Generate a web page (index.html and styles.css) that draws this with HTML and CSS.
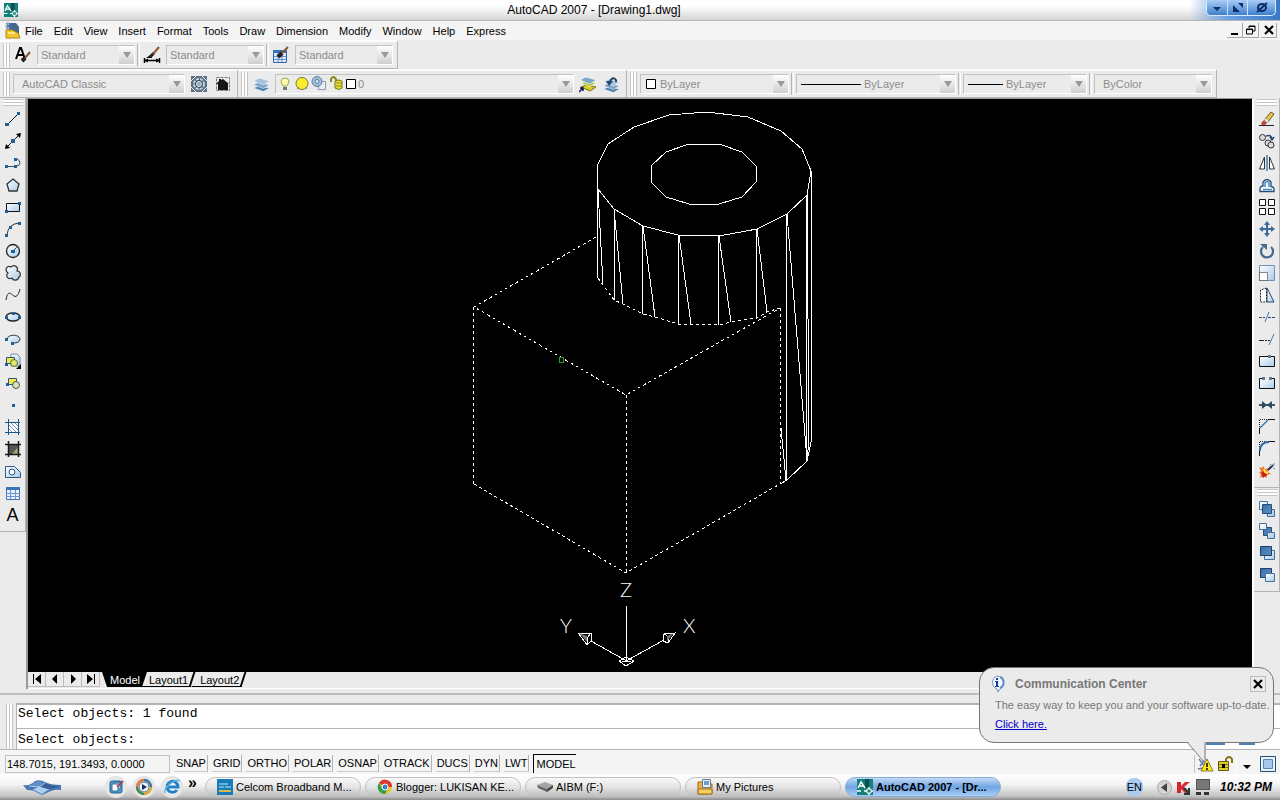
FILE: index.html
```
<!DOCTYPE html>
<html lang="en">
<head>
  <meta charset="UTF-8" />
  <title>AutoCAD 2007 - [Drawing1.dwg]</title>
  <link rel="stylesheet" href="styles.css">
</head>
<body>
  <!-- shared shapes -->
  <svg class="defs" aria-hidden="true">
    <defs>
      <linearGradient id="pale" x1="0" y1="0" x2="1" y2="1"><stop offset="0" stop-color="#fff"/><stop offset="1" stop-color="#a9cbe8"/></linearGradient>
      <linearGradient id="deep" x1="0" y1="0" x2="1" y2="1"><stop offset="0" stop-color="#3a6ea5"/><stop offset="1" stop-color="#5b8fc6"/></linearGradient>
      <symbol id="acad" viewBox="0 0 16 16"><path fill="#14807a" d="M0 0h16v16H0z"/><path fill="#0b4f50" d="M8 0h4v9H8z"/><path d="M1 9l3-6 4 6M2 7h4M7 12h9M12 8v8M0 12h4" fill="none" stroke="#fff" stroke-width="1.4"/><path fill="#14807a" stroke="#fff" d="M10 10h4v4h-4z"/></symbol>
      <symbol id="layers" viewBox="0 0 16 16"><path fill="#4c7fae" stroke="#fff" stroke-width=".5" d="M0 12l5-2 11 2-6 3.500z"/><path fill="#7ba6cc" stroke="#fff" stroke-width=".5" d="M0 9l5-3 11 3-6 3.500z"/><path fill="#a5c3dd" stroke="#fff" stroke-width=".5" d="M0 5l6-3 10 3-6 4z"/></symbol>
    </defs>
  </svg>

  <header class="titlebar">
    <svg class="app-icon" width="14" height="14"><use href="#acad"/></svg>
    <h1>AutoCAD 2007 - [Drawing1.dwg]</h1>
    <div class="window-buttons">
      <button aria-label="Minimize"><svg width="10" height="10"><path d="M1 4h8L5 8z" fill="#0c2f66"/></svg></button>
      <button aria-label="Restore"><svg width="12" height="10"><path d="M1 2v7h7zM6 0h5v5z" fill="#0c2f66"/></svg></button>
      <button class="wide" aria-label="Close"><svg width="12" height="11"><ellipse cx="6" cy="5.500" rx="4" ry="3.500" fill="none" stroke="#0c2f66" stroke-width="2"/><path d="M1 10L11 1" stroke="#0c2f66" stroke-width="2"/></svg></button>
    </div>
  </header>

  <nav class="menubar">
    <svg class="doc-icon" width="16" height="17"><path d="M4 1h7l3 4v9H4z" fill="#44668f"/><path d="M0 4h7M3 0v8M1 1l5 6M6 1L1 7" stroke="#4d78a8"/><path d="M1 8h6l6 3 2 5H1z" fill="#f5c431" stroke="#b98812"/><path d="M3 11h7" stroke="#ffeb8a" stroke-width="2"/></svg>
    <a href="#">File</a><a href="#">Edit</a><a href="#">View</a><a href="#">Insert</a><a href="#">Format</a><a href="#">Tools</a><a href="#">Draw</a><a href="#">Dimension</a><a href="#">Modify</a><a href="#">Window</a><a href="#">Help</a><a href="#">Express</a>
    <div class="doc-buttons">
      <button aria-label="Minimize drawing"><svg width="10" height="10"><path d="M1 8h7v2H1z"/></svg></button>
      <button aria-label="Restore drawing"><svg width="10" height="10" fill="none" stroke="#000"><path d="M3 3V1h6v5H7M3 1.500h6M.5 4v5h6V4zM0 4.500h7"/></svg></button>
      <button class="apart" aria-label="Close drawing"><svg width="10" height="10"><path d="M1 1l8 8M9 1L1 9" stroke="#000" stroke-width="2.200"/></svg></button>
    </div>
  </nav>

  <div class="toolbar-row">
    <div class="toolbar">
      <span class="grip"></span>
      <button class="tool" aria-label="Text Style"><svg width="18" height="18"><path d="M2 13L6 2h1l4 11M3 9h7" fill="none" stroke="#000" stroke-width="2"/><path d="M8 15l3-3" stroke="#222" stroke-width="4"/><path d="M11 12l5-6" stroke="#8b5630" stroke-width="2"/></svg></button>
      <div class="combo style"><select aria-label="Text style" disabled><option>Standard</option></select><i></i></div>
      <span class="sep"></span>
      <button class="tool" aria-label="Dimension Style"><svg width="18" height="18"><path d="M1.500 12v5M16.500 12v5M1 14.500h15" stroke="#000" stroke-width="1.500"/><path d="M1 14.500l4-2v4zM17 14.500l-4-2v4z"/><path d="M3 12l6-4v4z"/><path d="M7 11l4-4" stroke="#222" stroke-width="3"/><path d="M10 8l6-7" stroke="#8b5630" stroke-width="2"/></svg></button>
      <div class="combo style"><select aria-label="Dimension style" disabled><option>Standard</option></select><i></i></div>
      <span class="sep"></span>
      <button class="tool" aria-label="Table Style"><svg width="18" height="18"><path d="M1.500 4.500h13v12h-13z" fill="#dce9f8" stroke="#3565a8"/><path d="M1 4h14v3H1z" fill="#3d6fb4"/><path d="M2 10.500h12M2 13.500h12M6 7v9M10 7v9" stroke="#6690c8"/><path d="M6 11l4-4" stroke="#222" stroke-width="4"/><path d="M10 7l6-6" stroke="#8b5630" stroke-width="2"/></svg></button>
      <div class="combo style"><select aria-label="Table style" disabled><option>Standard</option></select><i></i></div>
    </div>
  </div>

  <div class="toolbar-row">
    <div class="toolbar">
      <span class="grip"></span>
      <div class="combo workspace-list inset"><select aria-label="Workspace" disabled><option>AutoCAD Classic</option></select><i></i></div>
      <button class="tool" aria-label="Workspace Settings"><svg width="16" height="16"><path d="M0 0h16v16H0z" fill="#5c7084"/><path d="M0 5l5-5M11 0l5 5M16 11l-5 5M5 16l-5-5" fill="none" stroke="#e4ebf1"/><circle cx="8" cy="8" r="5" fill="#34495e" stroke="#c3d2df" stroke-width="2" stroke-dasharray="3 1"/><circle cx="8" cy="8" r="2.500" fill="#8fa8bd" stroke="#dfe9f1"/></svg></button>
      <button class="tool" aria-label="My Workspace"><svg width="16" height="16"><path d="M1.500 1.500h13v13h-13z" fill="none" stroke="#777" stroke-dasharray="3 1"/><path d="M1 8l3-3V3h2v1l2-1 6 5h-1v6H3V8z" fill="#161616"/></svg></button>
    </div>
    <div class="toolbar">
      <span class="grip"></span>
      <button class="tool" aria-label="Layer Properties Manager"><svg width="17" height="16"><use href="#layers"/></svg></button>
      <div class="combo layer-list">
        <svg width="80" height="18">
          <path d="M5 7a4 4 0 1 1 8 0l-2 4H7z" fill="#fff9a8" stroke="#a3a35a"/><path d="M7 12h4v3H7z" fill="#777"/>
          <circle cx="26" cy="8.500" r="6" fill="#fbed2e" stroke="#77783a"/><path d="M21 14l2-2M31 14l-2-2" stroke="#8a8a8a"/>
          <path d="M42.500 6.500h7v8h-7z" fill="#e8eef4" stroke="#8a9bab"/><circle cx="41" cy="6.500" r="5" fill="#a5c0d8" stroke="#557b9e"/><circle cx="41" cy="6.500" r="2" fill="#dce9f4" stroke="#557b9e"/>
          <path d="M55 7V4q2-4 5 0v4" fill="none" stroke="#7e8b20" stroke-width="2"/><path d="M59 6q4-2 7 0v7q-3 3-7 0z" fill="#e6dd3c" stroke="#77761c"/><path d="M60 8h6M60 11h6" stroke="#8f8d1d"/>
          <path d="M70.500 4.500h9v9h-9z" fill="#fff" stroke="#000"/>
        </svg>
        <select aria-label="Layer" disabled><option>0</option></select><i></i>
      </div>
      <button class="tool" aria-label="Make Object's Layer Current"><svg width="18" height="17"><path d="M2 11l5-2 10 2-6 4z" fill="#d6cd22" stroke="#777421"/><path d="M2 7l5-2 10 2-6 4z" fill="#b6c94b" stroke="#fff" stroke-width=".5"/><path d="M1 4l6-3 10 3-6 4z" fill="#7ca6cc" stroke="#fff" stroke-width=".5"/><path d="M0 16l4-4M1 12h3v3" stroke="#111b55" fill="none" stroke-width="1.500"/></svg></button>
      <button class="tool" aria-label="Layer Previous"><svg width="18" height="17"><use href="#layers" y="1" width="17" height="16"/><path d="M13 6V4q-3-4-6 1" fill="none" stroke="#26466d" stroke-width="2"/><path d="M3 5h7l-4 5z" fill="#26466d"/></svg></button>
    </div>
    <div class="toolbar">
      <span class="grip"></span>
      <div class="combo color-list"><svg width="17" height="18"><path d="M5.500 4.500h9v9h-9z" fill="#fff" stroke="#000"/></svg><select aria-label="Color" disabled><option>ByLayer</option></select><i></i></div>
      <span class="sep"></span>
      <div class="combo linetype-list"><svg width="65" height="18"><path d="M4 9.500h60" stroke="#000"/></svg><select aria-label="Linetype" disabled><option>ByLayer</option></select><i></i></div>
      <span class="sep"></span>
      <div class="combo weight-list"><svg width="40" height="18"><path d="M4 9.500h35" stroke="#000"/></svg><select aria-label="Lineweight" disabled><option>ByLayer</option></select><i></i></div>
      <span class="sep"></span>
      <div class="combo plot-list inset"><select aria-label="Plot style" disabled><option>ByColor</option></select><i></i></div>
    </div>
  </div>

  <main class="workspace">
    <aside class="side">
      <div class="palette">
        <span class="grip flat"></span>
        <button aria-label="Line"><svg width="16" height="16"><path d="M2 14L14 2" stroke="#111"/><path d="M0 12h4v3H0zM12 1h3v3h-3z" fill="#1d5f96"/></svg></button>
        <button aria-label="Construction Line"><svg width="16" height="16"><path d="M2 14L14 2" stroke="#111"/><path d="M0 16l1-5 4 4zM16 0l-1 5-4-4z"/><path d="M6 6h4v4H6z" fill="#1d5f96"/></svg></button>
        <button aria-label="Polyline"><svg width="16" height="16" fill="none"><path d="M1 11.500h10M10 4h2q3 1 3 4t-4 3" stroke="#35506c"/><path d="M0 10h3v3H0zM9 10h3v3H9zM9 3h3v3H9z" fill="#1d5f96"/></svg></button>
        <button aria-label="Polygon"><svg width="16" height="16"><path d="M8 2l6 5-2 7H4L2 7z" fill="url(#pale)" stroke="#333" stroke-width="1.300"/></svg></button>
        <button aria-label="Rectangle"><svg width="16" height="16"><path d="M1.500 4.500h13v8h-13z" fill="url(#pale)" stroke="#111"/><path d="M0 11h3v3H0zM13 3h3v3h-3z" fill="#1d5f96"/></svg></button>
        <button aria-label="Arc"><svg width="16" height="16"><path d="M2 14Q3 3 14 2" fill="none" stroke="#333"/><path d="M0 13h3v3H0zM4 5h3v3H4zM13 1h3v3h-3z" fill="#1d5f96"/></svg></button>
        <button aria-label="Circle"><svg width="16" height="16"><circle cx="8" cy="8" r="6.500" fill="url(#pale)" stroke="#222" stroke-width="1.300"/><path d="M7 9l5-5" stroke="#1d5f96"/><path d="M6 7h4v3H6z" fill="#1d5f96"/></svg></button>
        <button aria-label="Revision Cloud"><svg width="16" height="16"><path d="M3 8C-1 5 2 0 6 2c3-3 8 0 6 4 4 0 4 5 2 6-1 4-6 4-7 1-4 2-7-2-4-5z" fill="url(#pale)" stroke="#333" stroke-width="1.200"/></svg></button>
        <button aria-label="Spline"><svg width="16" height="16"><path d="M1 13C3 2 6 7 9 9s5-3 6-7" fill="none" stroke="#222"/></svg></button>
        <button aria-label="Ellipse"><svg width="16" height="16"><ellipse cx="8" cy="8" rx="7" ry="4" fill="url(#pale)" stroke="#222" stroke-width="1.300"/><path d="M0 7h3v3H0zM13 7h3v3h-3zM7 3h3v3H7z" fill="#1d5f96"/></svg></button>
        <button aria-label="Ellipse Arc"><svg width="16" height="16"><path d="M2 8c1-5 12-5 13 0 0 3-3 4-7 4" fill="url(#pale)" stroke="#333"/><path d="M0 7h3v3H0zM6 11h3v3H6z" fill="#1d5f96"/></svg></button>
        <button aria-label="Insert Block"><svg width="16" height="16"><path d="M6 1h6l3 3v9H6z" fill="url(#pale)" stroke="#7793ac"/><path d="M1.500 4.500h8v6h-8z" fill="#f2e94e" stroke="#31517a"/><circle cx="9" cy="10" r="3.500" fill="#dbe86b" stroke="#56742b"/><path d="M0 10h3v3H0z" fill="#1d5f96"/><path d="M16 11v5h-5z"/></svg></button>
        <button aria-label="Make Block"><svg width="16" height="16"><path d="M3.500 3.500h8v6h-8z" fill="#f2e94e" stroke="#31517a"/><circle cx="11" cy="10" r="3.500" fill="#d5dfc2" stroke="#415d44"/><path d="M1 8h3v3H1z" fill="#1d5f96"/></svg></button>
        <button aria-label="Point"><svg width="16" height="16"><path d="M7 7h3v3H7z" fill="#1d5f96"/></svg></button>
        <button aria-label="Hatch"><svg width="16" height="16"><path d="M3 3h10v10H3z" fill="#fff"/><path d="M3 5l8 8M3 9l4 4M5 3l8 8M9 3l4 4" stroke="#6b95c0"/><path d="M0 3.500h15M0 13.500h15M3.500 0v16M13.500 0v16" stroke="#1f5584"/></svg></button>
        <button aria-label="Gradient"><svg width="16" height="16"><path d="M3 3h11v11H3z" fill="#56564c"/><path d="M7 13l6-7v7z" fill="#a5a57b"/><path d="M0 3.500h16M0 13.500h16M3.500 0v16M13.500 0v16" stroke="#17191d" stroke-width="1.500"/></svg></button>
        <button aria-label="Region"><svg width="16" height="16"><path d="M.5 3.500h9l6 6v5H.5z" fill="url(#pale)" stroke="#2c5885"/><circle cx="7" cy="9" r="3" fill="#eef5fb" stroke="#2c5885"/></svg></button>
        <button aria-label="Table"><svg width="16" height="16"><path d="M1.500 2.500h13v12h-13z" fill="#e8f1fc" stroke="#3f73b8"/><path d="M1 2h14v3H1z" fill="#3f73b8"/><path d="M5.500 5v9M10.500 5v9M1 8.500h14M1 11.500h14" stroke="#6a95d0"/></svg></button>
        <button class="mtext" aria-label="Multiline Text">A</button>
      </div>
    </aside>

    <section class="document">
      <svg class="model" viewBox="28 99 1224 573">
        <g fill="none" stroke="#fff" shape-rendering="crispEdges">
          <!-- cylinder rim and hole -->
          <path d="M597 166L608 144 634 127 669 115 707 112 748 117 781 131 802 149 811 171 807 195 787 214 757 229 719 236 678 235 643 226 614 209 598 189z"/>
          <path d="M651 166L666 152 689 144 719 144 742 152 756 166 756 182 742 197 719 204 689 204 666 197 651 182z"/>
          <!-- facets -->
          <path d="M597.500 166V278M598 189L603 285M614.500 209V300M614 209L623 304M642.500 226V314M643 226L655 317M678.500 235V324M679 235L691 324M718.500 236V325M719 236L731 322M756.500 229V318M757 229L767 312M786.500 214V480M787 214L807 460M806.500 195V461M807 195L809 440 807 461M811.500 171V440L807 461 787 480 780 484M781 428L786 480"/>
          <!-- selected solid -->
          <g stroke-dasharray="3 3">
            <path d="M598 278L603 285 614 300 623 304 643 314 655 317 678 324 691 324 719 325 731 322 757 318 767 312 780 308"/>
            <path d="M596 237L474 307L626 395L780 308M474 484L626 573L780 484"/>
            <path d="M473.500 307V484M626.500 395V573M780.500 308V484"/>
          </g>
          <path stroke="#2b9a2b" d="M559.500 357.500h4v5h-4z"/>
          <!-- UCS icon -->
          <path d="M626.500 606V661L591 641M626 661L664 640M619 661L626 657 634 661 626 666zM622 661h9"/>
          <path d="M578 633L591 633 592 640 587 645zM587 645L587 638 591 633M675 633L664 634 663 641 668 643zM668 643L669 637 664 634"/>
        </g>
        <path d="M579 633l8 3v6zM674 633l-7 3v5z" fill="#777"/>
        <g class="axis"><text x="620" y="597">Z</text><text x="560" y="633">Y</text><text x="683" y="633">X</text></g>
      </svg>
      <div class="layout-tabs">
        <button class="step" aria-label="First tab"><svg width="10" height="10"><path d="M1 0h1v10H1zM9 0v10L3 5z"/></svg></button>
        <button class="step" aria-label="Previous tab"><svg width="10" height="10"><path d="M7 0v10L2 5z"/></svg></button>
        <button class="step" aria-label="Next tab"><svg width="10" height="10"><path d="M3 0v10l5-5z"/></svg></button>
        <button class="step" aria-label="Last tab"><svg width="10" height="10"><path d="M8 0h1v10H8zM1 0v10l6-5z"/></svg></button>
        <button class="tab active">Model</button>
        <button class="tab">Layout1</button>
        <button class="tab">Layout2</button>
      </div>
    </section>

    <aside class="side right">
      <div class="palette">
        <span class="grip flat"></span>
        <button aria-label="Erase"><svg width="16" height="16"><path d="M0 14.500h15" stroke="#222"/><path d="M6 8l6-7 3 2-6 8z" fill="#e8c54a" stroke="#6d5a2a"/><path d="M5 9l2-2 3 3-2 2z" fill="#eee" stroke="#777" stroke-width=".5"/><path d="M2 12l3-3 3 3-2 2H3z" fill="#c34a35"/></svg></button>
        <button aria-label="Copy"><svg width="16" height="16" fill="#ddd" stroke="#333"><circle cx="3.500" cy="4.500" r="3"/><circle cx="9" cy="10" r="3"/><circle cx="12" cy="12" r="3"/><path d="M7 3q5-2 6 3M11 4l2 3 2-3" fill="none" stroke="#234c78" stroke-width="1.500"/></svg></button>
        <button aria-label="Mirror"><svg width="16" height="16"><path d="M5.500 2v12H.5zM10.500 2v12h5z" fill="#fff" stroke="#333"/><path d="M8 0v16" stroke="#3a7bb8" stroke-width="1.500"/></svg></button>
        <button aria-label="Offset"><svg width="16" height="16"><path d="M1 14.500h14v-3q-1-2-3-2V5q-4-5-8 0v4q-3 0-3 3z" fill="#fff" stroke="#234c78" stroke-width="1.300"/><path d="M4 12.500h9M6 10V6q2-3 4 0v4" fill="none" stroke="#3a8bc8" stroke-width="1.500"/></svg></button>
        <button aria-label="Array"><svg width="16" height="16"><path d="M.5.5h6v6h-6zM9.500.5h6v6h-6zM.5 9.500h6v6h-6zM9.500 9.500h6v6h-6z" fill="#fff" stroke="#111"/></svg></button>
        <button aria-label="Move"><svg width="16" height="16"><path d="M8 0l3 4H9v3h3V5l4 3-4 3V9H9v3h2l-3 4-3-4h2V9H4v2L0 8l4-3v2h3V4H5z" fill="#3c6a9a"/></svg></button>
        <button aria-label="Rotate"><svg width="16" height="16"><path d="M4 4a6 6 0 1 0 8 0" fill="none" stroke="#46698f" stroke-width="2.200"/><path d="M1 1h7v6z" fill="#46698f"/></svg></button>
        <button aria-label="Scale"><svg width="16" height="16"><path d="M.5.5h15v15H.5z" fill="url(#pale)" stroke="#6f93b8"/><path d="M.5 7.500h8v8h-8z" fill="#fff" stroke="#222" stroke-dasharray="1 1"/></svg></button>
        <button aria-label="Stretch"><svg width="16" height="16"><path d="M8 1l7 14H8z" fill="url(#pale)" stroke="#234c78"/><path d="M7.500 1L1.500 3v12h6z" fill="#fff" stroke="#222" stroke-dasharray="2 1"/></svg></button>
        <button aria-label="Trim"><svg width="16" height="16"><path d="M0 8.500h6M9 8.500h7" stroke="#234c78" stroke-dasharray="3 1"/><path d="M6 13l4-10" stroke="#3a7bb8"/></svg></button>
        <button aria-label="Extend"><svg width="16" height="16"><path d="M0 9.500h11" stroke="#222" stroke-dasharray="5 1 2 1"/><path d="M10 14l5-11" stroke="#3a7bb8"/></svg></button>
        <button aria-label="Break at Point"><svg width="16" height="16"><path d="M.5 3.500h15v10H.5z" fill="url(#pale)" stroke="#111"/><path d="M9 2h3v3H9z" fill="#62788d"/></svg></button>
        <button aria-label="Break"><svg width="16" height="16"><path d="M1 4h14v10H1z" fill="url(#pale)"/><path d="M3 3.500H.5v10h15v-10H13" fill="none" stroke="#111"/><path d="M3 2h3v3H3zM10 2h3v3h-3z" fill="#62788d"/></svg></button>
        <button aria-label="Join"><svg width="16" height="16"><path d="M0 8h16" stroke="#222" stroke-width="1.500"/><path d="M3 4l5 4-5 4zM13 4L8 8l5 4z" fill="#234c68"/></svg></button>
        <button aria-label="Chamfer"><svg width="16" height="16"><path d="M.5 8V.5H8" fill="none" stroke="#222" stroke-dasharray="1 1"/><path d="M.5 15v-6M9 .5h7" stroke="#111"/><path d="M1 9l8-8" stroke="#3a7bb8" stroke-width="1.500"/></svg></button>
        <button aria-label="Fillet"><svg width="16" height="16"><path d="M.5 8V.5H8" fill="none" stroke="#222" stroke-dasharray="1 1"/><path d="M.5 15v-6M9 .5h7" stroke="#111"/><path d="M1 10Q1 1 10 1" fill="none" stroke="#2d6ca8" stroke-width="2"/></svg></button>
        <button aria-label="Explode"><svg width="16" height="16"><path d="M0 4l3 1 1-2 2 3 4-1-1 4 3 2-4 1v3l-3-2-4 2 1-4-2-1 2-2z" fill="#ef7a2e"/><path d="M2 10l3-2 3 4-4 3z" fill="#c92218"/><path d="M5 6l1 3 3 1" stroke="#ffe14d" stroke-width="2" fill="none"/><path d="M9 7l5-5" stroke="#283a4d" stroke-width="2"/><path d="M11 1l2 2M14 5l2 1M15 0v3" stroke="#6b94b8"/></svg></button>
      </div>
      <div class="palette">
        <span class="grip flat"></span>
        <button aria-label="Bring to Front"><svg width="16" height="16" stroke="#46719c"><path d="M.5.5h8v8h-8zM8.500 8.500h7v7h-7z" fill="url(#pale)"/><path d="M3.500 3.500h9v9h-9z" fill="url(#deep)" stroke="#244d7c"/></svg></button>
        <button aria-label="Send to Back"><svg width="16" height="16" stroke="#46719c"><path d="M4.500 4.500h8v8h-8z" fill="url(#deep)" stroke="#244d7c"/><path d="M.5.500h7v6h-7zM8.500 9.500h7v6h-7z" fill="url(#pale)"/></svg></button>
        <button aria-label="Bring Above Objects"><svg width="16" height="16" stroke="#46719c"><path d="M5.500 5.500h10v9h-10z" fill="url(#pale)"/><path d="M1.500 1.500h11v9h-11z" fill="url(#deep)" stroke="#1b3f68"/></svg></button>
        <button aria-label="Send Under Objects"><svg width="16" height="16" stroke="#46719c"><path d="M1.500 1.500h11v9h-11z" fill="url(#deep)" stroke="#1b3f68"/><path d="M6.500 6.500h9v8h-9z" fill="url(#pale)"/></svg></button>
      </div>
    </aside>
  </main>

  <section class="command">
    <span class="grip tall"></span>
    <div class="console">
      <output>Select objects: 1 found</output>
      <input type="text" aria-label="Command line" value="Select objects:">
    </div>
  </section>

  <footer class="statusbar">
    <span class="coords">148.7015, 191.3493, 0.0000</span>
    <button>SNAP</button><button>GRID</button><button>ORTHO</button><button>POLAR</button><button>OSNAP</button><button>OTRACK</button><button>DUCS</button><button>DYN</button><button>LWT</button><button class="on">MODEL</button>
    <div class="status-tray">
      <div class="tray-box">
        <svg width="18" height="18"><path d="M3 4l7 9M10 3L4 11M2 14l5-1" stroke="#6278a5" stroke-width="1.500"/><path d="M11 4l6 12H5z" fill="#ffe924" stroke="#8c7f18"/><path d="M11 8v4M11 13v2" stroke="#000" stroke-width="1.500"/></svg>
        <svg width="18" height="18"><path d="M9 8V4q3-4 6 0v4" fill="none" stroke="#80751c" stroke-width="2"/><path d="M1.500 6.500h10v9h-10z" fill="#e2cf26" stroke="#625a10"/><path d="M2 9.500h9M2 12.500h9" stroke="#857a17"/><path d="M5 9h3v4H5z"/></svg>
      </div>
      <button class="more" aria-label="Status bar menu"><svg width="8" height="5"><path d="M0 0h8L4 4z"/></svg></button>
      <button class="clean" aria-label="Clean screen"><svg width="16" height="16"><path d="M.5.5h15v15H.5z" fill="#e8f2fb" stroke="#24507e"/><path d="M3.500 3.500h9v9h-9z" fill="#a5c9ea" stroke="#5688b8"/></svg></button>
    </div>

    <div class="balloon" role="status">
      <div class="balloon-head">
        <svg width="17" height="18"><path d="M8 1a7 7 0 0 1 3 13l-2 3-1-3A7 7 0 0 1 8 1z" fill="#f4f8ff" stroke="#6f93c4"/><path d="M11 2a6 6 0 0 1 0 11" fill="none" stroke="#5e8dcc" stroke-width="2"/><path d="M7 3h2v2H7zM6 6h3v5h1v1H6v-1h1V7H6z" fill="#173c9c"/></svg>
        <strong>Communication Center</strong>
        <button aria-label="Close message"><svg width="10" height="10"><path d="M1 1l8 8M9 1L1 9" stroke="#000" stroke-width="2.200"/></svg></button>
      </div>
      <p>The easy way to keep you and your software up-to-date.</p>
      <a href="#">Click here.</a>
      <svg class="tail" width="68" height="24"><path d="M19 2h49v2H19z" fill="#4d7fbd"/><path d="M38 2h14v2H38z" fill="#fff"/><path d="M0 0h19v22z" fill="#ebebeb"/><path d="M0 1l18 21V1" fill="none" stroke="#777"/></svg>
    </div>
  </footer>

  <div class="taskbar">
    <button class="start" aria-label="Start"><svg width="40" height="18"><path d="M1 7q8 1 12-4 5-2 10 1 5 3 16 3v5q-5-1-10 1l-9 4-8-4q-3-1-7-1z" fill="#4a77b3"/><path d="M13 4q5-2 9 1l-6 4q-4-1-9-1 4-1 6-4z" fill="#5f8fc8"/><path d="M23 5q6 3 15 3-6 3-12 3l-9-2z" fill="#37609b"/><path d="M12 12l5-3 9 3-6 4z" fill="#a9d2f2"/><path d="M7 8q10 0 20 4M23 5q-6 5-12 7" stroke="#dbe9f8" fill="none" stroke-width=".7"/></svg></button>
    <div class="quick">
      <button aria-label="Show Desktop"><svg width="18" height="18"><rect x="3" y="3" width="12" height="12" rx="2" fill="#4e99cc" stroke="#23608f"/><path d="M5 6h6v7H5zM7 5h6v6" fill="#fff" stroke="#31739f"/><path d="M10 9l6-6" stroke="#b33131" stroke-width="1.500"/></svg></button>
      <button aria-label="Media Player"><svg width="18" height="18" fill="none" stroke-width="2.500"><path d="M2 9a7 7 0 0 1 7-7" stroke="#de793f"/><path d="M9 2a7 7 0 0 1 7 7" stroke="#3c74a4"/><path d="M16 9a7 7 0 0 1-7 7" stroke="#d9a92c"/><path d="M9 16a7 7 0 0 1-7-7" stroke="#428743"/><circle cx="9" cy="9" r="5" fill="#f1f5fa" stroke="#566b88" stroke-width="1"/><path d="M7 6l5 3-5 3z" fill="#142d62"/></svg></button>
      <button aria-label="Internet Explorer"><svg width="18" height="18" fill="none"><path d="M14 12a5.500 5.500 0 1 1 1-3H5" stroke="#2582c4" stroke-width="3"/><path d="M2 15C0 10 12 0 17 3" stroke="#65b3e5" stroke-width="1.500"/></svg></button>
      <span class="chevron">»</span>
    </div>
    <nav class="tasks">
      <button><svg width="16" height="16"><path d="M0 0h16v16H0z" fill="#167db9"/><path d="M2 5h9M2 8h5M8 8h6" stroke="#c4e6f7"/><path d="M2 12h12" stroke="#d9b74b" stroke-width="2"/></svg><span>Celcom Broadband M...</span></button>
      <button><svg width="16" height="16"><circle cx="8" cy="8" r="7" fill="#e9c72c"/><path d="M2 4a7 7 0 0 1 13 4H8z" fill="#d83a2c"/><path d="M2 4a7 7 0 0 0 6 11l3-6H5z" fill="#2e9f4c"/><circle cx="8" cy="8" r="3" fill="#397bd3" stroke="#fff"/></svg><span>Blogger: LUKISAN KE...</span></button>
      <button><svg width="16" height="16"><path d="M0 6l8-3 8 3-6 4z" fill="#a6a6a6"/><path d="M0 6l10 4v3L1 9z" fill="#676767"/><path d="M10 10l6-4v3l-6 4z" fill="#444"/></svg><span>AIBM (F:)</span></button>
      <button><svg width="16" height="16"><path d="M1 3h5l1 2h8v10H1z" fill="#edb13b" stroke="#a36b16"/><path d="M5.500.500h8v8h-8z" fill="#e6f2fa" stroke="#617b97"/><path d="M7 2h5v4H7z" fill="#6f9fc7"/><path d="M1 10h14v5H1z" fill="#f7ce62" stroke="#a36b16"/></svg><span>My Pictures</span></button>
      <button class="current"><svg width="16" height="16"><use href="#acad"/></svg><span>AutoCAD 2007 - [Dr...</span></button>
    </nav>
    <div class="tray">
      <span class="lang">EN</span>
      <button aria-label="Show hidden icons"><svg width="15" height="15"><circle cx="7.500" cy="7.500" r="7" fill="#d5d5d5" stroke="#aaa"/><path d="M10 3v9L4 7.500z" fill="#444"/></svg></button>
      <svg width="15" height="15"><path d="M1 2h4v4l4-4h5L8 7l6 6H9L5 9v4H1z" fill="#d5272d"/><path d="M8 8l5 5M13 8v6H8" stroke="#233b33" stroke-width="2" fill="none"/></svg>
      <svg width="15" height="16"><path d="M1 0h14v11H1z" fill="#555"/><path d="M2 1h12v9H2z" fill="#777"/><path d="M1 13h5v3H1zM9 13h5v3H9z" fill="#333"/></svg>
      <time>10:32 PM</time>
    </div>
  </div>
</body>
</html>
```

FILE: styles.css
```
* {
  box-sizing: border-box;
}
body {
  margin: 0;
  min-height: 100vh;
  display: flex;
  flex-direction: column;
  background: #ebebeb;
  color: #000;
  font-family: "Liberation Sans", Arial, sans-serif;
  font-size: 11px;
  line-height: 14px;
  overflow: hidden;
}
svg {
  display: block;
  flex: none;
}
button {
  margin: 0;
  padding: 0;
  border: none;
  background: none;
  color: inherit;
  font: inherit;
  display: flex;
  align-items: center;
  justify-content: center;
}
.defs {
  position: absolute;
  width: 0;
  height: 0;
}

/* title bar */
.titlebar {
  height: 21px;
  display: flex;
  align-items: center;
  padding: 0 4px;
  background: linear-gradient(#fff 30%, #d4d4d4);
  border-bottom: 1px solid #b5b5b5;
  position: relative;
}
.titlebar h1 {
  flex: 1;
  margin: 0 36px 0 0;
  font-size: 12px;
  font-weight: normal;
  text-align: center;
}
.titlebar::after {
  content: "";
  position: absolute;
  top: 0;
  right: 0;
  width: 90px;
  height: 20px;
  background: linear-gradient(to right, transparent, #6ea3e0 40%, #3a78c8);
}
.window-buttons {
  display: flex;
  align-self: flex-start;
  height: 16px;
  border: 1px solid #d9eaff;
  border-top: none;
  border-radius: 0 0 5px 5px;
  background: linear-gradient(#a9cdf5, #3f7fce);
  z-index: 1;
}
.window-buttons button {
  width: 20px;
}
.window-buttons button + button {
  border-left: 1px solid #cfe3fb;
}
.window-buttons .wide {
  width: 28px;
}

/* menu */
.menubar {
  height: 19px;
  display: flex;
  align-items: center;
  gap: 11px;
  padding: 0 3px 0 5px;
  background: #f4f4f4;
}
.menubar a {
  color: #000;
  text-decoration: none;
}
.doc-icon {
  margin-right: -7px;
}
.doc-buttons {
  display: flex;
  margin-left: auto;
}
.doc-buttons button {
  width: 16px;
  height: 15px;
  border-right: 1px solid #a8a8a8;
  border-bottom: 1px solid #a8a8a8;
}
.doc-buttons .apart {
  margin-left: 2px;
}

/* toolbars */
.toolbar-row {
  display: flex;
  height: 29px;
}
.toolbar {
  display: flex;
  align-items: center;
  padding: 0 2px 0 3px;
  border-top: 2px solid #fcfcfc;
  border-right: 1px solid #b4b4b4;
  border-bottom: 1px solid #b4b4b4;
}
.grip {
  width: 7px;
  height: 24px;
  margin-right: 1px;
  border: solid #c4c4c4;
  border-width: 0 1px;
  background: linear-gradient(to right, #fff 2px, #c4c4c4 2px, #c4c4c4 3px, #fff 3px);
}
.grip.flat {
  width: 20px;
  height: 7px;
  margin: 1px 0 2px;
  border-width: 1px 0;
  background: linear-gradient(#fff 2px, #c4c4c4 2px, #c4c4c4 3px, #fff 3px);
}
.grip.tall {
  height: auto;
}
.tool {
  width: 24px;
  height: 24px;
}
.sep {
  width: 3px;
  height: 22px;
  border-left: 1px solid #b4b4b4;
  border-right: 1px solid #fff;
}
.combo {
  height: 20px;
  margin: 0 2px;
  display: flex;
  align-items: center;
  border: 1px solid #c2c2c2;
  border-right-color: #fff;
  border-bottom-color: #fff;
}
.combo select {
  appearance: none;
  flex: 1;
  min-width: 0;
  padding: 0 4px 0 3px;
  border: none;
  background: none;
  color: #8c8c8c;
  font: inherit;
  opacity: 1;
}
.combo.inset select {
  padding-left: 8px;
}
.combo svg + select {
  padding-left: 2px;
}
.combo i {
  width: 15px;
  height: 18px;
  display: grid;
  place-items: center;
  background: linear-gradient(#fff, #cfcfcf);
}
.combo i::after {
  content: "";
  border: 4px solid transparent;
  border-top: 6px solid #999;
  border-bottom: none;
}
.style { width: 98px; }
.workspace-list { width: 172px; }
.layer-list { width: 299px; }
.color-list { width: 149px; }
.linetype-list { width: 160px; }
.weight-list { width: 124px; }
.plot-list { width: 118px; }

/* drawing area */
.workspace {
  flex: 1;
  min-height: 0;
  display: flex;
}
.side {
  width: 26px;
}
.palette {
  display: flex;
  flex-direction: column;
  align-items: center;
  padding-bottom: 5px;
  border-right: 1px solid #b4b4b4;
  border-bottom: 1px solid #b4b4b4;
}
.palette button {
  width: 22px;
  height: 22px;
}
.palette .mtext {
  font-size: 18px;
}
.document {
  flex: 1;
  min-width: 0;
  display: flex;
  flex-direction: column;
  border-top: 1px solid #999;
  border-left: 2px solid #999;
  border-right: 2px solid #fff;
}
.model {
  flex: 1;
  width: 100%;
  min-height: 0;
  background: #000;
}
.axis {
  fill: #fff;
  font-family: Lato, sans-serif;
  font-size: 20px;
  font-weight: 300;
}
.layout-tabs {
  height: 17px;
  display: flex;
  border-bottom: 1px solid #fff;
}
.step {
  width: 18px;
  height: 15px;
  border-right: 1px solid #bbb;
  border-bottom: 1px solid #bbb;
}
.tab {
  position: relative;
  height: 15px;
  margin-left: 5px;
  padding: 0 5px 0 2px;
  z-index: 0;
}
.tab::before {
  content: "";
  position: absolute;
  inset: 0 0 0 -4px;
  border-right: 2px solid #000;
  border-bottom: 1px solid #000;
  transform: skewX(-18deg);
  z-index: -1;
}
.tab.active {
  margin-left: 8px;
  padding: 0 2px;
  color: #fff;
}
.tab.active::before {
  inset: 0 -5px 0 -6px;
  border: none;
  background: #000;
  transform: none;
  clip-path: polygon(0 0, 100% 0, calc(100% - 5px) 100%, 5px 100%);
}

/* command line */
.command {
  display: flex;
  margin-top: 4px;
  padding: 8px 0 0 6px;
  border-top: 2px solid #bdbdbd;
}
.console {
  flex: 1;
  margin-left: 2px;
  background: #fff;
  border-top: 2px solid #b4b4b4;
  border-left: 1px solid #b4b4b4;
  font: 13px/18px "Liberation Mono", "Courier New", monospace;
}
.console output {
  display: block;
  height: 24px;
  padding-left: 1px;
  border-bottom: 1px solid #b4b4b4;
}
.console input {
  display: block;
  width: 100%;
  height: 20px;
  padding: 0 0 0 1px;
  border: none;
  outline: none;
  background: none;
  font: inherit;
}

/* status bar */
.statusbar {
  position: relative;
  height: 25px;
  display: flex;
  align-items: center;
  gap: 4px;
  padding: 3px 4px 0 5px;
  background: #f4f4f4;
  border-top: 1px solid #b4b4b4;
}
.coords {
  width: 165px;
  height: 18px;
  margin-right: 1px;
  padding: 1px;
  border: 1px solid #c2c2c2;
}
.statusbar > button {
  height: 17px;
  padding: 0 1px;
  border-right: 1px solid #b4b4b4;
  border-bottom: 1px solid #ccc;
}
.statusbar > .on {
  height: 19px;
  padding: 0 0 0 2px;
  border: solid #000;
  border-width: 1px 0 0 1px;
}
.status-tray {
  display: flex;
  align-items: center;
  margin-left: auto;
}
.tray-box {
  display: flex;
  gap: 3px;
  padding: 0 1px;
  border-left: 1px solid #c2c2c2;
  border-right: 1px solid #fff;
}
.more {
  margin: 8px 9px 0 6px;
}

/* notification */
.balloon {
  position: absolute;
  right: 6px;
  bottom: 31px;
  width: 295px;
  height: 76px;
  padding: 7px 7px 0 15px;
  background: #ebebeb;
  border: 1px solid #777;
  border-radius: 15px;
  color: #777;
  font-size: 11px;
}
.balloon-head {
  display: flex;
  align-items: center;
  margin-left: -6px;
}
.balloon-head strong {
  flex: 1;
  margin-left: 9px;
  font-size: 12px;
}
.balloon-head button {
  width: 16px;
  height: 16px;
  border: 1px solid #bbb;
}
.balloon p {
  margin: 5px 0;
  white-space: nowrap;
}
.balloon a {
  color: #0000c8;
}
.tail {
  position: absolute;
  top: 73px;
  right: 18px;
}

/* taskbar */
.taskbar {
  height: 26px;
  display: flex;
  align-items: center;
  background: linear-gradient(#fff, #f4f4f4 40%, #c4c4c4 85%, #8c8c8c);
}
.start {
  width: 84px;
}
.quick {
  display: flex;
  align-items: center;
  gap: 6px;
  width: 121px;
  padding-left: 21px;
}
.quick button {
  width: 22px;
  height: 22px;
  border-radius: 50%;
  background: radial-gradient(#fff, #d5d5d5);
}
.chevron {
  margin: -8px 0 0 -1px;
  font-size: 16px;
  font-weight: bold;
}
.tasks {
  flex: 1;
  display: flex;
  gap: 4px;
}
.tasks button {
  flex: 0 1 156px;
  min-width: 0;
  height: 20px;
  justify-content: flex-start;
  gap: 3px;
  padding: 0 11px;
  border: 1px solid #c2c2c2;
  border-radius: 10px;
  background: linear-gradient(#f8f8f8, #e4e4e4 50%, #bfbfbf);
  white-space: nowrap;
}
.tasks .current {
  border-color: #86add6;
  background: linear-gradient(#c3dbf7, #6fa4e2 50%, #a9cff8);
  font-weight: bold;
}
.tray {
  display: flex;
  align-items: center;
  gap: 4px;
  padding-right: 8px;
}
.lang {
  margin-right: 10px;
  padding: 2px 1px;
  border-radius: 8px;
  background: #a9cbf0;
}
.tray time {
  margin-left: 6px;
  font-size: 12px;
  font-style: italic;
  font-weight: bold;
}
```
